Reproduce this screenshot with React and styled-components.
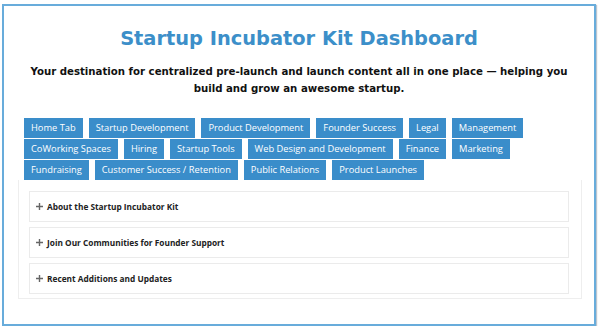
import React from "react";
import styled, { createGlobalStyle } from "styled-components";

const Global = createGlobalStyle`
  html, body { margin: 0; padding: 0; background: #fff; }
  body { font-family: "Open Sans", "Liberation Sans", sans-serif; }
`;

const Frame = styled.div`
  box-sizing: border-box;
  margin: 4px 0 0 2px;
  width: 594px;
  height: 322px;
  border: 2px solid #68acdb;
  box-shadow: 1px 1px 1px rgba(120, 140, 160, 0.5);
  display: flex;
  flex-direction: column;
  align-items: center;
  padding-top: 19px;
`;

const Title = styled.h1`
  margin: 0;
  font-family: "DejaVu Sans", sans-serif;
  font-weight: bold;
  font-size: 19.4px;
  line-height: 28px;
  color: #3c8fc9;
`;

const Subtitle = styled.p`
  margin: 10px 0 0;
  font-family: "DejaVu Sans", sans-serif;
  font-weight: bold;
  font-size: 10.2px;
  line-height: 17px;
  color: #111;
  text-align: center;
  width: 556px;
`;

const Tabs = styled.div`
  align-self: flex-start;
  margin: 21px 0 0 20px;
  display: flex;
  flex-direction: column;
  gap: 1px;
`;

const TabRow = styled.div`
  display: flex;
  gap: 6px;
`;

const Tab = styled.div`
  height: 20px;
  padding: 0 7px;
  background: #3a8dca;
  color: #fff;
  font-size: 9.3px;
  line-height: 20px;
  white-space: nowrap;
`;

const Panel = styled.div`
  box-sizing: border-box;
  align-self: flex-start;
  margin-left: 14px;
  width: 564px;
  border: 1px solid #eeeeee;
  border-top: none;
  padding: 11px 12px 4px 10px;
  display: flex;
  flex-direction: column;
  gap: 5px;
`;

const Item = styled.div`
  box-sizing: border-box;
  height: 31px;
  border: 1px solid #ebebeb;
  display: flex;
  align-items: center;
  padding-left: 6px;
  gap: 4px;
  font-size: 8.3px;
  font-weight: bold;
  color: #222;
`;

const Plus = styled.svg`
  width: 7px;
  height: 7px;
  flex: none;
`;

const rows = [
  ["Home Tab", "Startup Development", "Product Development", "Founder Success", "Legal", "Management"],
  ["CoWorking Spaces", "Hiring", "Startup Tools", "Web Design and Development", "Finance", "Marketing"],
  ["Fundraising", "Customer Success / Retention", "Public Relations", "Product Launches"],
];

const items = [
  "About the Startup Incubator Kit",
  "Join Our Communities for Founder Support",
  "Recent Additions and Updates",
];

export default function App() {
  return (
    <>
      <Global />
      <Frame>
        <Title>Startup Incubator Kit Dashboard</Title>
        <Subtitle>
          Your destination for centralized pre-launch and launch content all in one place — helping you build and grow an awesome startup.
        </Subtitle>
        <Tabs>
          {rows.map((r, i) => (
            <TabRow key={i}>
              {r.map((t) => (
                <Tab key={t}>{t}</Tab>
              ))}
            </TabRow>
          ))}
        </Tabs>
        <Panel>
          {items.map((t) => (
            <Item key={t}>
              <Plus viewBox="0 0 7 7">
                <path d="M3.5 0V7M0 3.5H7" stroke="#666" strokeWidth="1.4" />
              </Plus>
              {t}
            </Item>
          ))}
        </Panel>
      </Frame>
    </>
  );
}
